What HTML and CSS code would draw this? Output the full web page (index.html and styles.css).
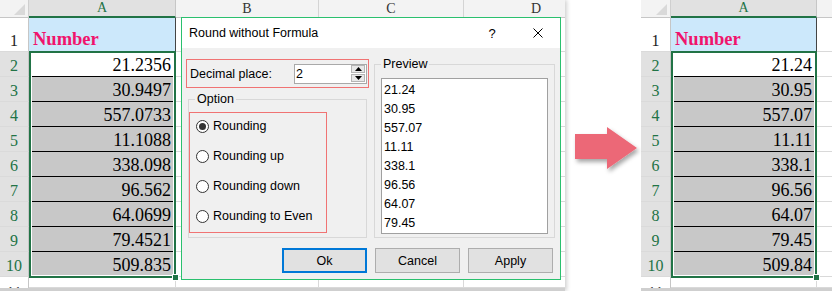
FILE: index.html
```
<!DOCTYPE html>
<html lang="en">
<head>
<meta charset="utf-8">
<title>Round without Formula</title>
<link rel="stylesheet" href="styles.css">
</head>
<body>
<div class="page">
  <div class="sheet sheet-left">
    <div class="grid">
      <div class="corner"><span class="tri"></span></div>
      <div class="ch sel">A</div><div class="ch">B</div><div class="ch">C</div><div class="ch">D</div>

      <div class="rh">1</div><div class="c a head">Number</div><div class="c"></div><div class="c"></div><div class="c"></div>
      <div class="rh sel">2</div><div class="c a num active">21.2356</div><div class="c"></div><div class="c"></div><div class="c"></div>
      <div class="rh sel">3</div><div class="c a num">30.9497</div><div class="c"></div><div class="c"></div><div class="c"></div>
      <div class="rh sel">4</div><div class="c a num">557.0733</div><div class="c"></div><div class="c"></div><div class="c"></div>
      <div class="rh sel">5</div><div class="c a num">11.1088</div><div class="c"></div><div class="c"></div><div class="c"></div>
      <div class="rh sel">6</div><div class="c a num">338.098</div><div class="c"></div><div class="c"></div><div class="c"></div>
      <div class="rh sel">7</div><div class="c a num">96.562</div><div class="c"></div><div class="c"></div><div class="c"></div>
      <div class="rh sel">8</div><div class="c a num">64.0699</div><div class="c"></div><div class="c"></div><div class="c"></div>
      <div class="rh sel">9</div><div class="c a num">79.4521</div><div class="c"></div><div class="c"></div><div class="c"></div>
      <div class="rh sel">10</div><div class="c a num">509.835</div><div class="c"></div><div class="c"></div><div class="c"></div>
      <div class="rh last">11</div><div class="c"></div><div class="c"></div><div class="c"></div><div class="c"></div>

      <div class="selection"><span class="handle"></span></div>
    </div>
  </div>

  <div class="gap">
    <svg class="arrow" width="76" height="291" viewBox="0 0 76 291">
      <defs>
        <filter id="sh" x="-30%" y="-30%" width="160%" height="170%">
          <feDropShadow dx="2" dy="3" stdDeviation="2" flood-color="#000" flood-opacity="0.35"/>
        </filter>
      </defs>
      <polygon points="10,134 42,134 42,127 72,148 42,169 42,159 10,159" fill="#ec6877" filter="url(#sh)"/>
    </svg>
  </div>

  <div class="sheet sheet-right">
    <div class="grid">
      <div class="corner"><span class="tri"></span></div>
      <div class="ch sel">A</div><div class="ch"></div>

      <div class="rh">1</div><div class="c a head">Number</div><div class="c"></div>
      <div class="rh sel">2</div><div class="c a num active">21.24</div><div class="c"></div>
      <div class="rh sel">3</div><div class="c a num">30.95</div><div class="c"></div>
      <div class="rh sel">4</div><div class="c a num">557.07</div><div class="c"></div>
      <div class="rh sel">5</div><div class="c a num">11.11</div><div class="c"></div>
      <div class="rh sel">6</div><div class="c a num">338.1</div><div class="c"></div>
      <div class="rh sel">7</div><div class="c a num">96.56</div><div class="c"></div>
      <div class="rh sel">8</div><div class="c a num">64.07</div><div class="c"></div>
      <div class="rh sel">9</div><div class="c a num">79.45</div><div class="c"></div>
      <div class="rh sel">10</div><div class="c a num">509.84</div><div class="c"></div>
      <div class="rh last">11</div><div class="c"></div><div class="c"></div>

      <div class="selection"><span class="handle"></span></div>
    </div>
  </div>

  <div class="dialog">
    <div class="titlebar">
      <span class="title">Round without Formula</span>
      <span class="help">?</span>
      <span class="close">
        <svg width="10" height="10" viewBox="0 0 10 10"><path d="M0.5 0.5 L9.5 9.5 M9.5 0.5 L0.5 9.5" stroke="#000" stroke-width="1" fill="none"/></svg>
      </span>
    </div>
    <div class="body">
      <div class="cols">
        <div class="leftcol">
          <div class="decimal">
            <span class="label">Decimal place:</span>
            <div class="spin">
              <span class="spin-val">2</span>
              <div class="spin-btns">
                <span class="spin-btn"><svg width="7" height="4" viewBox="0 0 7 4"><polygon points="3.5,0 7,4 0,4" fill="#000"/></svg></span>
                <span class="spin-btn"><svg width="7" height="4" viewBox="0 0 7 4"><polygon points="0,0 7,0 3.5,4" fill="#000"/></svg></span>
              </div>
            </div>
          </div>
          <fieldset class="group optgroup">
            <legend>Option</legend>
            <div class="options">
              <div class="opt"><span class="radio on"><span class="dot"></span></span><span>Rounding</span></div>
              <div class="opt"><span class="radio"></span><span>Rounding up</span></div>
              <div class="opt"><span class="radio"></span><span>Rounding down</span></div>
              <div class="opt"><span class="radio"></span><span>Rounding to Even</span></div>
            </div>
          </fieldset>
        </div>
        <fieldset class="group preview">
          <legend>Preview</legend>
          <div class="list">
            <div>21.24</div>
            <div>30.95</div>
            <div>557.07</div>
            <div>11.11</div>
            <div>338.1</div>
            <div>96.56</div>
            <div>64.07</div>
            <div>79.45</div>
          </div>
        </fieldset>
      </div>
      <div class="buttons">
        <span class="btn default">Ok</span>
        <span class="btn">Cancel</span>
        <span class="btn">Apply</span>
      </div>
    </div>
  </div>
</div>
</body>
</html>
```
FILE: styles.css
```
* { box-sizing: border-box; }
html, body { margin: 0; padding: 0; }
body { width: 832px; height: 291px; overflow: hidden; background: #fff; }

.page { position: relative; display: flex; width: 832px; height: 291px; }

.sheet {
  height: 291px;
  border-bottom: 3px solid #cfcfcf;
  overflow: hidden;
  background: #fff;
  font-family: "Liberation Serif", "Times New Roman", serif;
  flex: none;
}
.sheet-left { width: 565px; box-shadow: 2px 0 4px rgba(0,0,0,0.18); position: relative; z-index: 1; }
.gap { width: 76px; flex: none; }
.sheet-right { width: 191px; }

.grid {
  position: relative;
  display: grid;
  grid-template-rows: 18px 34px repeat(9, 25px) 11px;
}
.sheet-left .grid { grid-template-columns: 29px 147px 143px 145px 145px; }
.sheet-right .grid { grid-template-columns: 30px 146px 146px; }

.corner {
  background: #f3f3f3;
  border-right: 1px solid #cfcfcf;
  border-bottom: 1px solid #c6c6c6;
  display: flex;
  justify-content: flex-end;
  align-items: flex-end;
  padding: 0 3px 2px 0;
}
.tri {
  width: 11px; height: 11px;
  background: #d9d9d9;
  clip-path: polygon(100% 0, 100% 100%, 0 100%);
}

.ch {
  background: #f3f3f3;
  border-right: 1px solid #d4d4d4;
  border-bottom: 1px solid #c6c6c6;
  display: flex;
  justify-content: center;
  align-items: center;
  font-size: 14px;
  color: #333;
}
.ch.sel {
  background: #e1e1e1;
  color: #217346;
  border-bottom: 2px solid #217346;
  border-right-color: #c6c6c6;
}

.rh {
  background: #fff;
  border-right: 1px solid #c6c6c6;
  border-bottom: 1px solid #dadada;
  display: flex;
  justify-content: center;
  align-items: flex-end;
  padding-bottom: 2px;
  font-size: 16px;
  line-height: 1;
  color: #222;
}
.rh.sel { background: #e1e1e1; color: #217346; }
.rh.last { align-items: flex-start; padding-top: 8px; overflow: hidden; border-bottom: none; }

.c {
  border-right: 1px solid #d9d9d9;
  border-bottom: 1px solid #d9d9d9;
}
.a {
  display: flex;
  justify-content: flex-end;
  align-items: flex-end;
  padding: 0 5px 2px 0;
  font-size: 18px;
  line-height: 1;
  color: #000;
}
.a.head {
  background: #cce8fb;
  justify-content: flex-start;
  padding: 0 0 3px 4px;
  font-weight: bold;
  font-size: 18.5px;
  color: #f0146c;
  border-right: 1px solid #444;
}
.a.num { background: #c8c8c8; border-bottom: 1px solid #000; border-right: none; }
.a.num.active { background: #fff; }

.selection {
  position: absolute;
  top: 51px;
  height: 227px;
  border: 2px solid #217346;
  box-shadow: inset 0 0 0 1px #fff;
}
.sheet-left .selection { left: 29px; width: 147px; }
.sheet-right .selection { left: 30px; width: 146px; }
.handle {
  position: absolute;
  right: -5px;
  bottom: -5px;
  width: 7px; height: 7px;
  background: #217346;
  border: 1px solid #fff;
}

.arrow { display: block; }

/* Dialog */
.dialog {
  position: absolute;
  left: 181px; top: 17px;
  width: 380px; height: 263px;
  border: 1px solid #2ac06e;
  background: #f0f0f0;
  font-family: "Liberation Sans", Arial, sans-serif;
  font-size: 12.5px;
  color: #000;
  z-index: 5;
  display: flex;
  flex-direction: column;
}
.titlebar {
  height: 30px;
  background: #fff;
  display: flex;
  align-items: center;
  padding: 0 12px 0 7px;
  flex: none;
}
.title { flex: 1; }
.help { width: 20px; text-align: center; font-size: 13px; }
.close { width: 20px; margin-left: 26px; display: flex; justify-content: center; }
.close svg { display: block; }

.body {
  flex: 1;
  display: flex;
  flex-direction: column;
  padding: 9px 5px 0 4px;
}
.cols { display: flex; gap: 5px; height: 181px; }
.leftcol { width: 183px; padding-top: 2px; flex: none; }

.decimal {
  height: 29px;
  border: 1px solid #f07373;
  display: flex;
  align-items: center;
  justify-content: space-between;
  padding: 0 1px 0 3px;
}
.spin {
  width: 73px; height: 20px;
  background: #fff;
  border: 1px solid #a9a9a9;
  display: flex;
  align-items: center;
}
.spin-val { flex: 1; padding-left: 1px; }
.spin-btns {
  display: flex;
  flex-direction: column;
  gap: 1px;
  width: 14px;
  margin-right: 1px;
}
.spin-btn {
  height: 8px;
  background: #e8e8e8;
  border: 1px solid #b5b5b5;
  display: flex;
  align-items: center;
  justify-content: center;
}
.spin-btn svg { display: block; }

.group {
  margin: 0;
  padding: 0;
  border: 1px solid #d8d8d8;
  min-width: 0;
}
.group legend {
  margin-left: 6px;
  padding: 0 2px;
  line-height: 14px;
  font-size: 12.5px;
}
.optgroup { margin: 4px 0 0 2px; width: 179px; height: 146px; }
.options {
  margin-top: 6px;
  width: 138px;
  height: 121px;
  border: 1px solid #f07373;
  display: flex;
  flex-direction: column;
  gap: 4px;
}
.opt {
  height: 26px;
  display: flex;
  align-items: center;
  gap: 4px;
  padding-left: 6px;
}
.radio {
  width: 13px; height: 13px;
  border: 1px solid #333;
  border-radius: 50%;
  background: #fff;
  display: flex;
  align-items: center;
  justify-content: center;
  flex: none;
}
.dot { width: 7px; height: 7px; border-radius: 50%; background: #333; }

.preview { width: 181px; height: 181px; flex: none; }
.list {
  margin: 7px 0 0 6px;
  width: 167px;
  height: 156px;
  background: #fff;
  border: 1px solid #a0a0a0;
  padding: 2px 0 0 2px;
  line-height: 19px;
}

.buttons {
  display: flex;
  justify-content: flex-end;
  gap: 8px;
  margin-top: 10px;
  padding-right: 2px;
}
.btn {
  width: 85px; height: 25px;
  background: #e1e1e1;
  border: 1px solid #adadad;
  display: flex;
  align-items: center;
  justify-content: center;
}
.btn.default { border: 2px solid #0078d7; }
```
